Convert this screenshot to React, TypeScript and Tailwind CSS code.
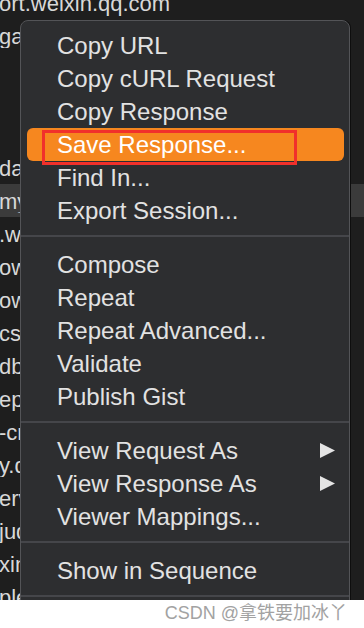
import React from "react";

const leftRows: string[] = [
  "ort.weixin.qq.com",
  "gam",
  "",
  "",
  "",
  "dat",
  "myp",
  ".wx",
  "owx",
  "owx",
  "csd",
  "dbk",
  "epq",
  "-crq",
  "y.q",
  "erve",
  "juqc",
  "xinq",
  "pleq",
];

type Item = { label: string; active?: boolean; sub?: boolean };

const groups: Item[][] = [
  [
    { label: "Copy URL" },
    { label: "Copy cURL Request" },
    { label: "Copy Response" },
    { label: "Save Response...", active: true },
    { label: "Find In..." },
    { label: "Export Session..." },
  ],
  [
    { label: "Compose" },
    { label: "Repeat" },
    { label: "Repeat Advanced..." },
    { label: "Validate" },
    { label: "Publish Gist" },
  ],
  [
    { label: "View Request As", sub: true },
    { label: "View Response As", sub: true },
    { label: "Viewer Mappings..." },
  ],
  [{ label: "Show in Sequence" }],
];

function Arrow() {
  return (
    <svg width="15" height="15" viewBox="0 0 15 15">
      <polygon points="0,0 15,7.5 0,15" fill="#e4e4e4" />
    </svg>
  );
}

export default function App() {
  return (
    <div
      className="relative w-[364px] h-[628px] bg-white overflow-hidden"
      style={{ fontFamily: '"Liberation Sans", Arial, sans-serif' }}
    >
      <div className="relative h-[600px] bg-[#1e1e1e] overflow-hidden">
        {/* background list */}
        <div className="flex flex-col mt-[-14px]">
          {leftRows.map((t, i) => (
            <div
              key={i}
              className={`h-[33px] flex items-center pt-[3px] whitespace-nowrap text-[22px] leading-none text-[#d8d8d8] ${
                i === 6 ? "bg-[#3b3b3b]" : ""
              }`}
            >
              <div className={i === 0 ? "" : "w-[20px] overflow-hidden"}>
                <span className="ml-[-1px]">{t}</span>
              </div>
            </div>
          ))}
        </div>

        {/* context menu */}
        <div className="absolute left-[20px] top-[20px] w-[330px] h-[620px] rounded-[8px] border border-[#535457] bg-[#2d2e30] shadow-[1px_0_0_#0e0e0e] pt-[8px]">
          {groups.map((g, gi) => (
            <div key={gi}>
              {gi > 0 && <div className="h-[2px] mt-[8px] mb-[11px] bg-[#45464a]" />}
              {g.map((it) =>
                it.active ? (
                  <div
                    key={it.label}
                    className="h-[33px] ml-[6px] mr-[5px] pl-[30px] rounded-[6px] bg-[#f6871f] flex items-center text-[24px] leading-none text-white"
                  >
                    {it.label}
                  </div>
                ) : (
                  <div
                    key={it.label}
                    className="h-[33px] pl-[36px] pr-[14px] flex items-center justify-between text-[24px] leading-none text-[#e2e2e2]"
                  >
                    <span>{it.label}</span>
                    {it.sub && <Arrow />}
                  </div>
                )
              )}
            </div>
          ))}
          <div className="h-[2px] mt-[8px] bg-[#45464a]" />
        </div>

        {/* annotation box */}
        <div className="absolute left-[42px] top-[130px] w-[255px] h-[35px] border-[3px] border-[#f1302b]" />
      </div>

      {/* watermark strip */}
      <div className="h-[28px] flex items-start pt-[2px] justify-end pr-[17px]">
        <span
          className="text-[18px] leading-[22px] text-[#a2a2a2]"
          style={{ fontFamily: '"Liberation Sans", "Noto Sans CJK SC", sans-serif' }}
        >
          CSDN @拿铁要加冰丫
        </span>
      </div>
    </div>
  );
}
